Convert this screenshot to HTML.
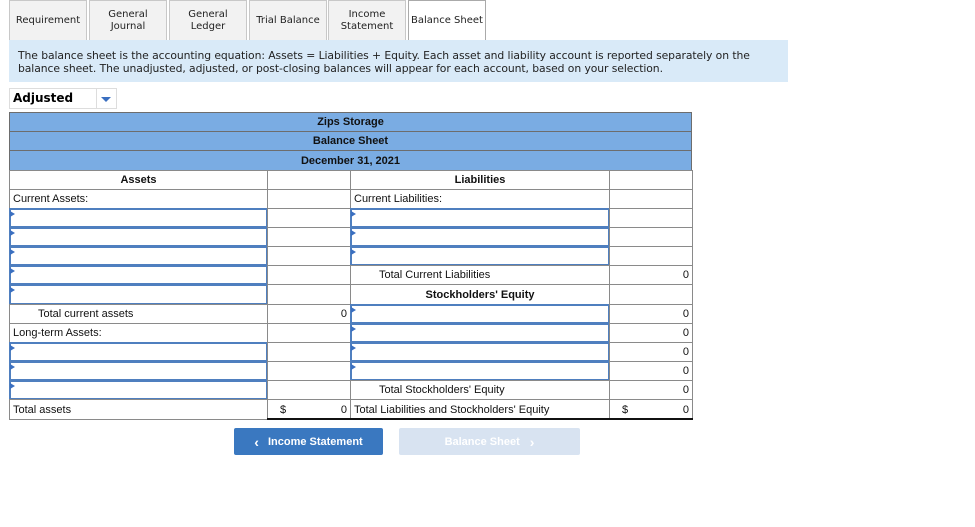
<!DOCTYPE html><html><head><meta charset="utf-8"><style>
body{margin:0;width:975px;height:527px;background:#fff;position:relative;font-family:"Liberation Sans",Arial,sans-serif;overflow:hidden}
.a{position:absolute;box-sizing:border-box}
.tab{position:absolute;top:0;height:40px;border:1px solid #c8c8c8;border-bottom:none;background:#f2f2f2;font-family:"DejaVu Sans",sans-serif;font-size:10px;color:#222;display:flex;align-items:center;justify-content:center;text-align:center;line-height:12px;box-sizing:border-box}
.c{position:absolute;box-sizing:border-box;border:1px solid #8a8a8a;font-size:11px;color:#111;display:flex;align-items:center;padding:0 3px;white-space:nowrap}
.h{background:#7aace3;border-color:#6d6d6d;justify-content:center;font-weight:bold;font-size:11px}
.in{position:absolute;box-sizing:border-box;border:2px solid #4f7fbf;background:#fff}
.in:before{content:"";position:absolute;left:-1px;top:1px;border-left:5px solid #3a6fc0;border-top:3px solid transparent;border-bottom:3px solid transparent}
.r{justify-content:flex-end}
</style></head><body>
<div class="tab" style="left:9px;width:78px">Requirement</div>
<div class="tab" style="left:89px;width:78px">General<br>Journal</div>
<div class="tab" style="left:169px;width:78px">General<br>Ledger</div>
<div class="tab" style="left:249px;width:78px">Trial Balance</div>
<div class="tab" style="left:328px;width:78px">Income<br>Statement</div>
<div class="tab" style="left:408px;width:78px;background:#fff;border-color:#aaa">Balance Sheet</div>
<div class="a" style="left:9px;top:40px;width:779px;height:42px;background:#d9eaf8;font-family:'DejaVu Sans',sans-serif;font-size:10.8px;letter-spacing:-0.08px;color:#222;padding:9px 9px;line-height:13px">The balance sheet is the accounting equation: Assets = Liabilities + Equity. Each asset and liability account is reported separately on the balance sheet. The unadjusted, adjusted, or post-closing balances will appear for each account, based on your selection.</div>
<div class="a" style="left:9px;top:88px;width:108px;height:21px;border:1px solid #ddd;font-family:'DejaVu Sans',sans-serif;font-weight:bold;font-size:12px;padding:2px 3px">Adjusted<span class="a" style="left:86px;top:0;width:1px;height:19px;background:#ddd"></span><span class="a" style="left:91px;top:8px;border-top:5px solid #3a6fc0;border-left:5px solid transparent;border-right:5px solid transparent"></span></div>
<div class="c h" style="left:9px;top:112px;width:683px;height:20px">Zips Storage</div>
<div class="c h" style="left:9px;top:131px;width:683px;height:20px">Balance Sheet</div>
<div class="c h" style="left:9px;top:150px;width:683px;height:21px">December 31, 2021</div>
<div id="g"></div>
<script>
var rows=[170,189,208,227,246,265,284,304,323,342,361,380,399,419];
var cols=[9,267,350,609,692];
var cells={
"0,0":["Assets","b c"],"0,2":["Liabilities","b c"],
"1,0":["Current Assets:"],"1,2":["Current Liabilities:"],
"5,2":["Total Current Liabilities","i"],"5,3":["0","r"],
"6,2":["Stockholders' Equity","b c"],
"7,0":["Total current assets","i"],"7,1":["0","r"],"7,3":["0","r"],
"8,0":["Long-term Assets:"],"8,3":["0","r"],"9,3":["0","r"],"10,3":["0","r"],
"11,2":["Total Stockholders' Equity","i"],"11,3":["0","r"],
"12,0":["Total assets"],"12,1":["$","d"],"12,2":["Total Liabilities and Stockholders' Equity"],"12,3":["$","d"]};
var inL=[2,3,4,5,6,9,10,11],inR=[2,3,4,7,8,9,10];
var h="";
for(var i=0;i<13;i++)for(var j=0;j<4;j++){
var x=cols[j],y=rows[i],w=cols[j+1]-x+1,hh=rows[i+1]-y+1;
var k=cells[i+","+j],st="",t="";
if(k){t=k[0];var f=k[1]||"";
if(f.indexOf("b")>=0)st+="font-weight:bold;";
if(f.indexOf("c")>=0)st+="justify-content:center;";
if(f.indexOf("i")>=0)st+="padding-left:28px;";
if(f=="r")st+="justify-content:flex-end;";
if(f=="d")t='<span style="position:absolute;left:12px">$</span><span style="position:absolute;right:3px">0</span>';
}
h+='<div class="c" style="left:'+x+'px;top:'+y+'px;width:'+w+'px;height:'+hh+'px;'+st+'">'+t+'</div>';
if((j==0&&inL.indexOf(i)>=0)||(j==2&&inR.indexOf(i)>=0))h+='<div class="in" style="left:'+x+'px;top:'+y+'px;width:'+w+'px;height:'+hh+'px"></div>';
}
h+='<div class="a" style="left:267px;top:418px;width:426px;height:2px;background:#111"></div><div class="a" style="left:609px;top:418px;width:84px;height:2px;background:#111"></div>';
document.getElementById("g").innerHTML=h;
</script>
<div class="a" style="left:234px;top:428px;width:149px;height:27px;background:#3a78c0;border-radius:2px;color:#fff;font-weight:bold;font-size:11px;display:flex;align-items:center;justify-content:center"><span style="font-size:14px;margin-right:9px">‹</span>Income Statement</div>
<div class="a" style="left:399px;top:428px;width:181px;height:27px;background:#d8e3f1;border-radius:2px;color:#fff;font-weight:bold;font-size:11px;display:flex;align-items:center;justify-content:center">Balance Sheet<span style="font-size:14px;margin-left:10px">›</span></div>
</body></html>
